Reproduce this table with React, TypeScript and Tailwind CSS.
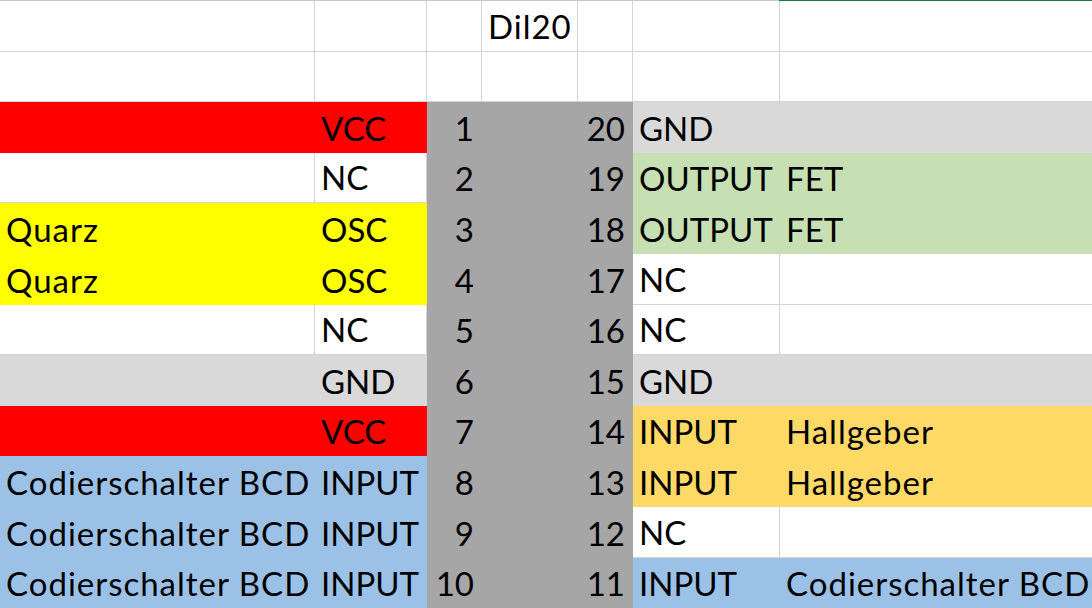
import React from "react";

type Row = {
  a: string;
  b: string;
  lc: string;
  pl: string;
  pr: string;
  f: string;
  g: string;
  rc: string;
};

const W = "bg-white";
const RED = "bg-[#ff0000]";
const YEL = "bg-[#ffff00]";
const LG = "bg-[#d9d9d9]";
const GRN = "bg-[#c6e0b4]";
const ORG = "bg-[#ffd966]";
const BLU = "bg-[#9bc2e6]";

const rows: Row[] = [
  { a: "", b: "VCC", lc: RED, pl: "1", pr: "20", f: "GND", g: "", rc: LG },
  { a: "", b: "NC", lc: W, pl: "2", pr: "19", f: "OUTPUT", g: "FET", rc: GRN },
  { a: "Quarz", b: "OSC", lc: YEL, pl: "3", pr: "18", f: "OUTPUT", g: "FET", rc: GRN },
  { a: "Quarz", b: "OSC", lc: YEL, pl: "4", pr: "17", f: "NC", g: "", rc: W },
  { a: "", b: "NC", lc: W, pl: "5", pr: "16", f: "NC", g: "", rc: W },
  { a: "", b: "GND", lc: LG, pl: "6", pr: "15", f: "GND", g: "", rc: LG },
  { a: "", b: "VCC", lc: RED, pl: "7", pr: "14", f: "INPUT", g: "Hallgeber", rc: ORG },
  { a: "Codierschalter BCD", b: "INPUT", lc: BLU, pl: "8", pr: "13", f: "INPUT", g: "Hallgeber", rc: ORG },
  { a: "Codierschalter BCD", b: "INPUT", lc: BLU, pl: "9", pr: "12", f: "NC", g: "", rc: W },
  { a: "Codierschalter BCD", b: "INPUT", lc: BLU, pl: "10", pr: "11", f: "INPUT", g: "Codierschalter BCD", rc: BLU },
];

function Cell({
  w,
  bg,
  text,
  right,
  grid,
  noRight,
}: {
  w: string;
  bg: string;
  text?: string;
  right?: boolean;
  grid: boolean;
  noRight?: boolean;
}) {
  const border = grid
    ? noRight
      ? "border-b border-[#d4d4d4]"
      : "border-r border-b border-[#d4d4d4]"
    : "";
  const hasLower = !!text && /[a-z]/.test(text);
  return (
    <div
      className={`${w} ${bg} ${border} h-full shrink-0 flex items-end ${
        right ? "justify-end pr-[8px]" : "justify-start pl-[6px]"
      } pb-[8px] whitespace-nowrap overflow-visible`}
    >
      {text ? (
        <span className={`leading-none ${hasLower ? "tracking-[1px]" : ""}`}>{text}</span>
      ) : null}
    </div>
  );
}

export default function App() {
  const font = { fontFamily: "Lato, 'Open Sans', sans-serif" };
  return (
    <div
      className="w-[1092px] h-[608px] overflow-hidden bg-white text-black text-[33px] flex flex-col"
      style={font}
    >
      <div className="flex h-[1px] shrink-0">
        <div className="w-[779px] bg-[#c8c8c8]" />
        <div className="flex-1 bg-[#217346]" />
      </div>
      <div className="flex h-[50.6px] shrink-0">
        <Cell w="w-[315px]" bg={W} grid />
        <Cell w="w-[112px]" bg={W} grid />
        <Cell w="w-[55px]" bg={W} grid />
        <Cell w="w-[96px]" bg={W} grid text="Dil20" />
        <Cell w="w-[55px]" bg={W} grid />
        <Cell w="w-[147px]" bg={W} grid />
        <Cell w="w-[312px]" bg={W} grid noRight />
      </div>
      <div className="flex h-[50.6px] shrink-0">
        <Cell w="w-[315px]" bg={W} grid />
        <Cell w="w-[112px]" bg={W} grid />
        <Cell w="w-[55px]" bg={W} grid />
        <Cell w="w-[96px]" bg={W} grid />
        <Cell w="w-[55px]" bg={W} grid />
        <Cell w="w-[147px]" bg={W} grid />
        <Cell w="w-[312px]" bg={W} grid noRight />
      </div>
      {rows.map((r, i) => {
        const lw = r.lc === W;
        const rw = r.rc === W;
        return (
          <div key={i} className="flex h-[50.6px] shrink-0">
            <Cell w="w-[315px]" bg={r.lc} grid={lw} text={r.a} />
            <Cell w="w-[112px]" bg={r.lc} grid={lw} text={r.b} />
            <Cell w="w-[55px]" bg="bg-[#a6a6a6]" grid={false} text={r.pl} right />
            <Cell w="w-[96px]" bg="bg-[#a6a6a6]" grid={false} />
            <Cell w="w-[55px]" bg="bg-[#a6a6a6]" grid={false} text={r.pr} right />
            <Cell w="w-[147px]" bg={r.rc} grid={rw} text={r.f} />
            <Cell w="w-[312px]" bg={r.rc} grid={rw} noRight text={r.g} />
          </div>
        );
      })}
    </div>
  );
}
